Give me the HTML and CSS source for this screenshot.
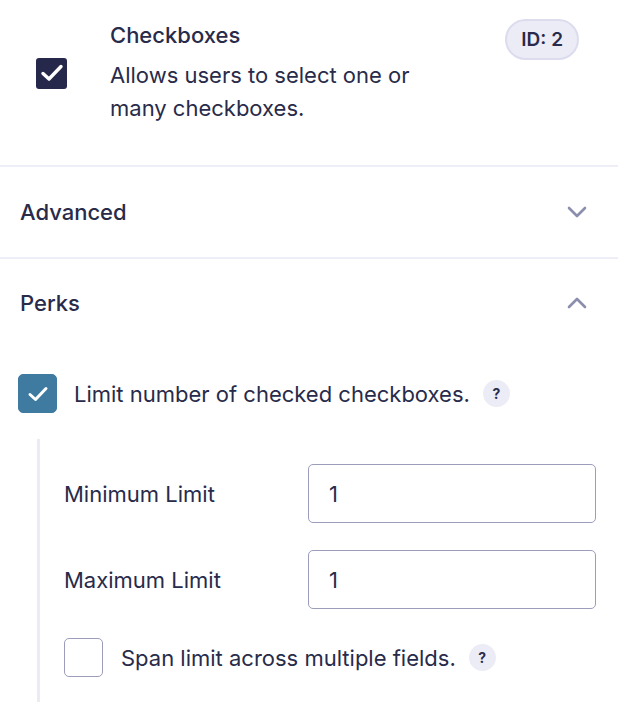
FILE: index.html
```html
<!DOCTYPE html>
<html lang="en">
<head>
    <meta charset="UTF-8">
    <meta name="viewport" content="width=device-width, initial-scale=1.0">
    <title>Checkboxes Field Settings</title>
    <link rel="stylesheet" href="styles.css">
</head>
<body>
    <div class="field-head">
        <span class="check-icon">
            <svg width="24" height="20" viewBox="0 0 24 20"><polyline points="3,10.5 9,16 21,3.5" fill="none" stroke="#fff" stroke-width="3.4" stroke-linecap="round" stroke-linejoin="round"/></svg>
        </span>
        <div class="field-text">
            <div class="field-title">Checkboxes</div>
            <div class="field-desc">Allows users to select one or<br>many checkboxes.</div>
        </div>
        <span class="badge">ID: 2</span>
    </div>

    <div class="panel">
        <div class="panel-head">
            <span>Advanced</span>
            <svg class="chevron" width="20" height="12" viewBox="0 0 20 12"><polyline points="2,2 10,10 18,2" fill="none" stroke="#8c8eae" stroke-width="2.6" stroke-linecap="round" stroke-linejoin="round"/></svg>
        </div>
    </div>

    <div class="panel open">
        <div class="panel-head">
            <span>Perks</span>
            <svg class="chevron" width="20" height="12" viewBox="0 0 20 12"><polyline points="2,10 10,2 18,10" fill="none" stroke="#8c8eae" stroke-width="2.6" stroke-linecap="round" stroke-linejoin="round"/></svg>
        </div>
        <div class="panel-body">
            <label class="option">
                <span class="box checked">
                    <svg width="22" height="18" viewBox="0 0 22 18"><polyline points="3,9.5 8.5,14.5 19,3.5" fill="none" stroke="#fff" stroke-width="3" stroke-linecap="round" stroke-linejoin="round"/></svg>
                </span>
                <span class="option-text">Limit number of checked checkboxes.</span>
                <span class="help">?</span>
            </label>

            <div class="sub-settings">
                <div class="setting-row">
                    <span class="setting-label">Minimum Limit</span>
                    <input class="setting-input" type="text" value="1">
                </div>
                <div class="setting-row">
                    <span class="setting-label">Maximum Limit</span>
                    <input class="setting-input" type="text" value="1">
                </div>
                <label class="option small">
                    <span class="box"></span>
                    <span class="option-text">Span limit across multiple fields.</span>
                    <span class="help">?</span>
                </label>
            </div>
        </div>
    </div>
</body>
</html>
```

FILE: styles.css
```css
body {
    margin: 0;
    font-family: Inter, "Noto Sans", sans-serif;
    color: #282b4a;
    background: #fff;
    font-size: 22px;
}

/* field header */
.field-head {
    display: flex;
    align-items: center;
    padding: 21px 39px 40px 36px;
    border-bottom: 2px solid #eeeef6;
}

.check-icon {
    width: 31px;
    height: 31px;
    flex-shrink: 0;
    border-radius: 3px;
    background: #25284a;
    display: flex;
    align-items: center;
    justify-content: center;
    margin-right: 43px;
}

.field-text {
    flex: 1;
}

.field-title {
    font-weight: 500;
    line-height: 28px;
    margin-bottom: 10px;
}

.field-desc {
    line-height: 33px;
}

.badge {
    align-self: flex-start;
    margin-top: -2px;
    height: 37px;
    padding: 0 14px;
    border: 2px solid #dcdcee;
    border-radius: 21px;
    background: #ececf6;
    font-size: 19px;
    font-weight: 600;
    line-height: 37px;
}

/* collapsible panels */
.panel {
    border-bottom: 2px solid #eeeef6;
}

.panel.open {
    border-bottom: none;
}

.panel-head {
    display: flex;
    justify-content: space-between;
    align-items: center;
    height: 90px;
    padding: 0 31px 0 20px;
    font-weight: 500;
}

.panel.open .panel-head {
    height: 87px;
}

.panel-body {
    padding: 28px 21px 0 18px;
}

/* checkbox options */
.option {
    display: flex;
    align-items: center;
}

.box {
    width: 37px;
    height: 37px;
    flex-shrink: 0;
    border: 1.5px solid #9c9dba;
    border-radius: 5px;
    margin-right: 17px;
    display: flex;
    align-items: center;
    justify-content: center;
}

.box.checked {
    background: #3f7aa0;
    border-color: #3f7aa0;
}

.help {
    width: 27px;
    height: 27px;
    margin-left: 13px;
    border-radius: 50%;
    background: #ececf6;
    font-size: 14px;
    font-weight: 700;
    text-align: center;
    line-height: 27px;
}

.sub-settings {
    margin: 26px 0 0 19px;
    padding: 25px 0 25px 24px;
    border-left: 3px solid #ebebf5;
}

.setting-row {
    display: flex;
    align-items: center;
    margin-bottom: 27px;
}

.setting-label {
    width: 244px;
}

.setting-input {
    width: 288px;
    height: 59px;
    box-sizing: border-box;
    border: 1.5px solid #9c9dba;
    border-radius: 5px;
    padding: 0 20px;
    font-family: inherit;
    font-size: 22px;
    color: #282b4a;
    outline: none;
}

.option.small {
    margin-top: 29px;
}

.option.small .box {
    margin-right: 18px;
}
```
